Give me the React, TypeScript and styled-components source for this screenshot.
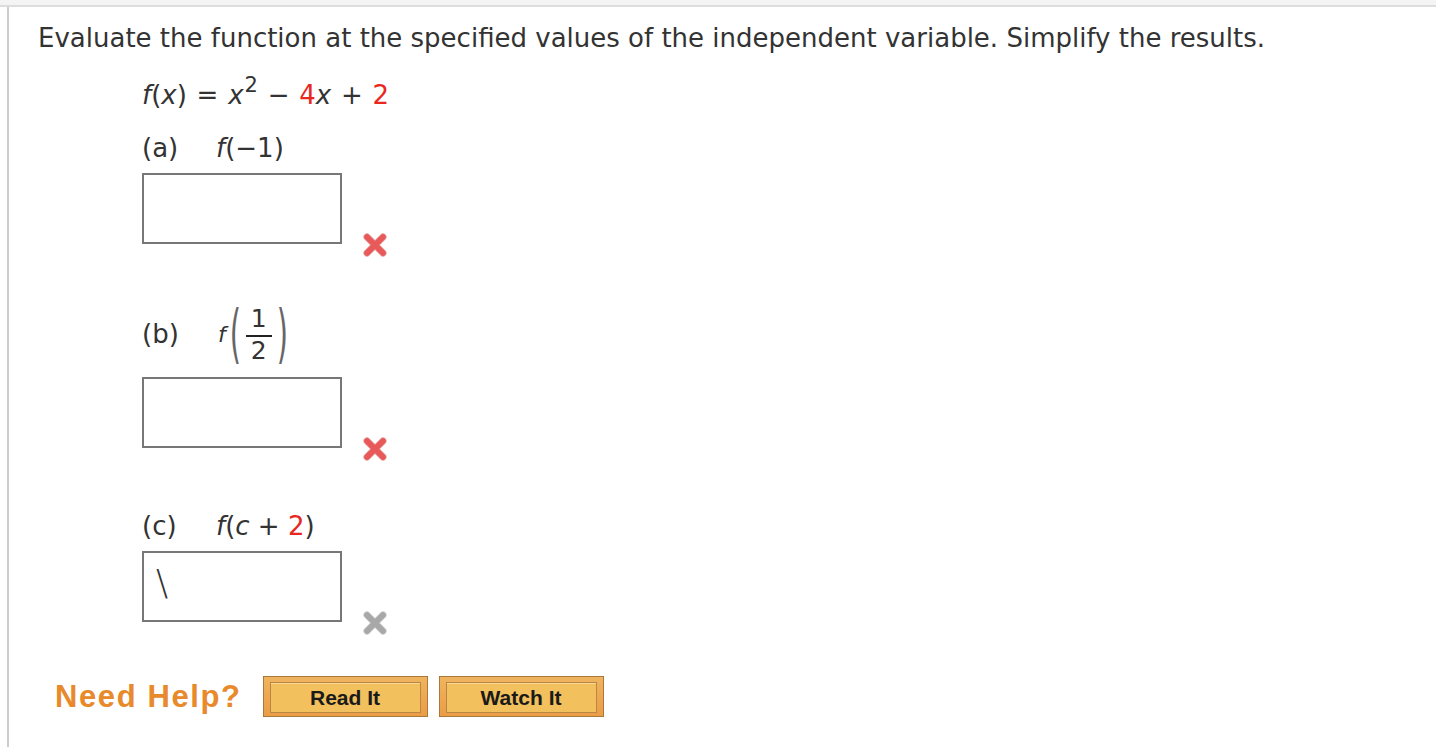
import React from "react";
import styled, { createGlobalStyle } from "styled-components";

const GlobalStyle = createGlobalStyle`
  html, body {
    margin: 0;
    padding: 0;
    background: #ffffff;
  }
  body {
    font-family: "DejaVu Sans", Verdana, sans-serif;
    color: #333333;
  }
`;

const TopStrip = styled.div`
  height: 5px;
  background: #f4f4f4;
  border-bottom: 2px solid #dddddd;
`;

const Frame = styled.div`
  margin-left: 7px;
  border-left: 2px solid #cccccc;
  min-height: 740px;
  padding: 16px 0 0 29px;
  box-sizing: border-box;
`;

const Prompt = styled.p`
  margin: 0;
  font-size: 26px;
  line-height: 30px;
  color: #333333;
`;

const Parts = styled.div`
  padding-left: 104px;
  font-size: 26px;
  color: #333333;
`;

const Formula = styled.div`
  margin-top: 27px;
  line-height: 30px;
  white-space: nowrap;
  word-spacing: 1.5px;
`;

const I = styled.i`
  font-style: italic;
`;

const Red = styled.span`
  color: #e8281f;
`;

const Sup = styled.sup`
  font-size: 21px;
  line-height: 0;
  vertical-align: 12px;
  margin-left: 1px;
`;

const Label = styled.div<{ $top: number; $height?: number }>`
  display: flex;
  align-items: center;
  margin-top: ${(p) => p.$top}px;
  height: ${(p) => p.$height ?? 30}px;
  white-space: nowrap;
`;

const Letter = styled.span`
  width: 74px;
`;

const Frac = styled.span`
  display: inline-flex;
  align-items: center;
  font-size: 25px;
  height: 66px;
`;

const SmallF = styled.i`
  font-style: italic;
  font-size: 22px;
  margin-left: 2px;
  margin-right: 2px;
`;

const Paren = styled.span`
  font-size: 64px;
  font-weight: 400;
  line-height: 66px;
  display: inline-block;
  transform: scaleX(0.45);
  color: #666666;
  margin: 0 -5px;
`;

const Stack = styled.span`
  display: inline-flex;
  flex-direction: column;
  align-items: center;
  line-height: 28px;
  margin: 0 3px;
`;

const Numer = styled.span`
  border-bottom: 2px solid #222;
  padding: 0 5px 2px;
  line-height: 28px;
`;

const Denom = styled.span`
  line-height: 26px;
  padding-top: 1px;
`;

const AnswerRow = styled.div<{ $top: number }>`
  display: flex;
  align-items: flex-end;
  margin-top: ${(p) => p.$top}px;
`;

const Box = styled.div`
  width: 200px;
  height: 71px;
  border: 2px solid #777777;
  box-sizing: border-box;
  padding: 10px 0 0 12px;
  font-size: 36px;
  font-weight: 200;
  line-height: 40px;
  color: #333;
`;

const Mark = styled.svg`
  width: 26px;
  height: 26px;
  margin-left: 20px;
  margin-bottom: -14px;
`;

const Help = styled.div`
  display: flex;
  align-items: center;
  margin-top: 54px;
  padding-left: 17px;
`;

const HelpText = styled.span`
  font-family: "Liberation Sans", Arial, sans-serif;
  font-weight: bold;
  font-size: 31px;
  letter-spacing: 1.6px;
  color: #e8892b;
  margin-right: 21px;
`;

const HelpButton = styled.button`
  width: 165px;
  height: 41px;
  margin-right: 11px;
  padding: 5px 6px 5px;
  background: linear-gradient(#f0b45e, #eb9d45);
  border: 1px solid #a8783c;
  box-sizing: border-box;
  cursor: pointer;
  span {
    display: flex;
    align-items: center;
    justify-content: center;
    height: 100%;
    background: #f2c05c;
    border: 1px solid #b88646;
    box-shadow: inset 0 1px 0 #f8d98e;
    font-family: "Liberation Sans", Arial, sans-serif;
    font-weight: bold;
    font-size: 21px;
    color: #1a1a1a;
  }
`;

const XMark: React.FC<{ color: string; dark: string }> = ({ color, dark }) => (
  <Mark viewBox="0 0 26 26">
    <path d="M5 5 L21 21 M21 5 L5 21" stroke={dark} strokeWidth="7" strokeLinecap="round" opacity="0.55" />
    <path d="M5 5 L21 21 M21 5 L5 21" stroke={color} strokeWidth="5.5" strokeLinecap="round" />
  </Mark>
);

const redX = <XMark color="#e85a5a" dark="#d04040" />;
const grayX = <XMark color="#a8a8a8" dark="#999999" />;

const App: React.FC = () => {
  return (
    <>
      <GlobalStyle />
      <TopStrip />
      <Frame>
        <Prompt>
          Evaluate the function at the specified values of the independent variable. Simplify the results.
        </Prompt>
        <Parts>
          <Formula>
            <I>f</I>(<I>x</I>) = <I>x</I>
            <Sup>2</Sup> − <Red>4</Red>
            <I>x</I> + <Red>2</Red>
          </Formula>

          <Label $top={23}>
            <Letter>(a)</Letter>
            <span>
              <I>f</I>(−1)
            </span>
          </Label>
          <AnswerRow $top={10}>
            <Box />
            {redX}
          </AnswerRow>

          <Label $top={57} $height={66}>
            <Letter>(b)</Letter>
            <Frac>
              <SmallF>f</SmallF>
              <Paren>(</Paren>
              <Stack>
                <Numer>1</Numer>
                <Denom>2</Denom>
              </Stack>
              <Paren>)</Paren>
            </Frac>
          </Label>
          <AnswerRow $top={10}>
            <Box />
            {redX}
          </AnswerRow>

          <Label $top={63}>
            <Letter>(c)</Letter>
            <span>
              <I>f</I>(<I>c</I> + <Red>2</Red>)
            </span>
          </Label>
          <AnswerRow $top={10}>
            <Box>\</Box>
            {grayX}
          </AnswerRow>
        </Parts>
        <Help>
          <HelpText>Need Help?</HelpText>
          <HelpButton>
            <span>Read It</span>
          </HelpButton>
          <HelpButton>
            <span>Watch It</span>
          </HelpButton>
        </Help>
      </Frame>
    </>
  );
};

export default App;
